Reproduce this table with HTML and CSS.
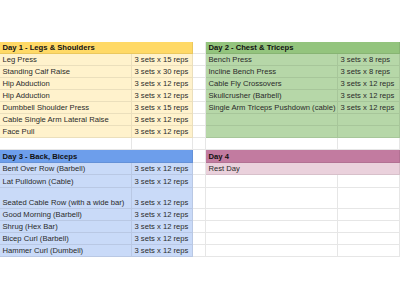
FILE: index.html
```html
<!DOCTYPE html>
<html>
<head>
<meta charset="utf-8">
<link rel="stylesheet" href="styles.css">
</head>
<body>
<div class="top"></div>
<div class="sheet">
  <div class="row r12">
    <div class="c span2 yh hd">Day 1 - Legs &amp; Shoulders</div><div class="c w"></div><div class="c span2 gh hd">Day 2 - Chest &amp; Triceps</div>
  </div>
  <div class="row r12">
    <div class="c y">Leg Press</div><div class="c y">3 sets x 15 reps</div><div class="c w"></div><div class="c g">Bench Press</div><div class="c g">3 sets x 8 reps</div>
  </div>
  <div class="row r12">
    <div class="c y">Standing Calf Raise</div><div class="c y">3 sets x 30 reps</div><div class="c w"></div><div class="c g">Incline Bench Press</div><div class="c g">3 sets x 8 reps</div>
  </div>
  <div class="row r12">
    <div class="c y">Hip Abduction</div><div class="c y">3 sets x 12 reps</div><div class="c w"></div><div class="c g">Cable Fly Crossovers</div><div class="c g">3 sets x 12 reps</div>
  </div>
  <div class="row r12">
    <div class="c y">Hip Adduction</div><div class="c y">3 sets x 12 reps</div><div class="c w"></div><div class="c g">Skullcrusher (Barbell)</div><div class="c g">3 sets x 12 reps</div>
  </div>
  <div class="row r12">
    <div class="c y">Dumbbell Shoulder Press</div><div class="c y">3 sets x 15 reps</div><div class="c w"></div><div class="c g">Single Arm Triceps Pushdown (cable)</div><div class="c g">3 sets x 12 reps</div>
  </div>
  <div class="row r12">
    <div class="c y">Cable Single Arm Lateral Raise</div><div class="c y">3 sets x 12 reps</div><div class="c w"></div><div class="c g"></div><div class="c g"></div>
  </div>
  <div class="row r12">
    <div class="c y">Face Pull</div><div class="c y">3 sets x 12 reps</div><div class="c w"></div><div class="c g"></div><div class="c g"></div>
  </div>
  <div class="row r12">
    <div class="c w"></div><div class="c w"></div><div class="c w"></div><div class="c w"></div><div class="c w"></div>
  </div>
  <div class="row r13">
    <div class="c span2 bh hd">Day 3 - Back, Biceps</div><div class="c w"></div><div class="c span2 mh hd">Day 4</div>
  </div>
  <div class="row r12">
    <div class="c b">Bent Over Row (Barbell)</div><div class="c b">3 sets x 12 reps</div><div class="c w"></div><div class="c span2 m">Rest Day</div>
  </div>
  <div class="row r13">
    <div class="c b">Lat Pulldown (Cable)</div><div class="c b">3 sets x 12 reps</div><div class="c w"></div><div class="c w"></div><div class="c w"></div>
  </div>
  <div class="row r21">
    <div class="c b">Seated Cable Row (with a wide bar)</div><div class="c b">3 sets x 12 reps</div><div class="c w"></div><div class="c w"></div><div class="c w"></div>
  </div>
  <div class="row r12">
    <div class="c b">Good Morning (Barbell)</div><div class="c b">3 sets x 12 reps</div><div class="c w"></div><div class="c w"></div><div class="c w"></div>
  </div>
  <div class="row r12">
    <div class="c b">Shrug (Hex Bar)</div><div class="c b">3 sets x 12 reps</div><div class="c w"></div><div class="c w"></div><div class="c w"></div>
  </div>
  <div class="row r12">
    <div class="c b">Bicep Curl (Barbell)</div><div class="c b">3 sets x 12 reps</div><div class="c w"></div><div class="c w"></div><div class="c w"></div>
  </div>
  <div class="row r12">
    <div class="c b">Hammer Curl (Dumbell)</div><div class="c b">3 sets x 12 reps</div><div class="c w"></div><div class="c w"></div><div class="c w"></div>
  </div>
</div>
</body>
</html>
```

FILE: styles.css
```css
html, body {
  margin: 0;
  padding: 0;
  background: #ffffff;
  width: 400px;
  height: 300px;
  overflow: hidden;
}
body {
  font-family: "Liberation Sans", Arial, sans-serif;
  font-size: 7.65px;
  color: #2a2a2a;
}
.top {
  height: 42px;
}
.sheet {
  display: flex;
  flex-direction: column;
}
.row {
  display: grid;
  grid-template-columns: 132px 61px 13px 132px 62px;
}
.r12 { height: 12px; }
.r13 { height: 13px; }
.r21 { height: 21px; }
.c {
  box-sizing: border-box;
  border-right: 1px solid rgba(0, 0, 0, 0.08);
  border-bottom: 1px solid rgba(0, 0, 0, 0.08);
  display: flex;
  align-items: flex-end;
  padding: 0 0 1px 2.5px;
  line-height: 9px;
  white-space: nowrap;
  overflow: hidden;
}
.span2 { grid-column: span 2; }
.hd { font-weight: bold; color: #111; }
.w { background: #fff; border-color: #e6e6e6; }
.y { background: #fff2cc; }
.yh { background: #ffd966; }
.g { background: #b6d7a8; }
.gh { background: #93c47d; }
.b { background: #c9daf8; }
.bh { background: #6d9eeb; }
.m { background: #ead1dc; }
.mh { background: #c27ba0; }
```
